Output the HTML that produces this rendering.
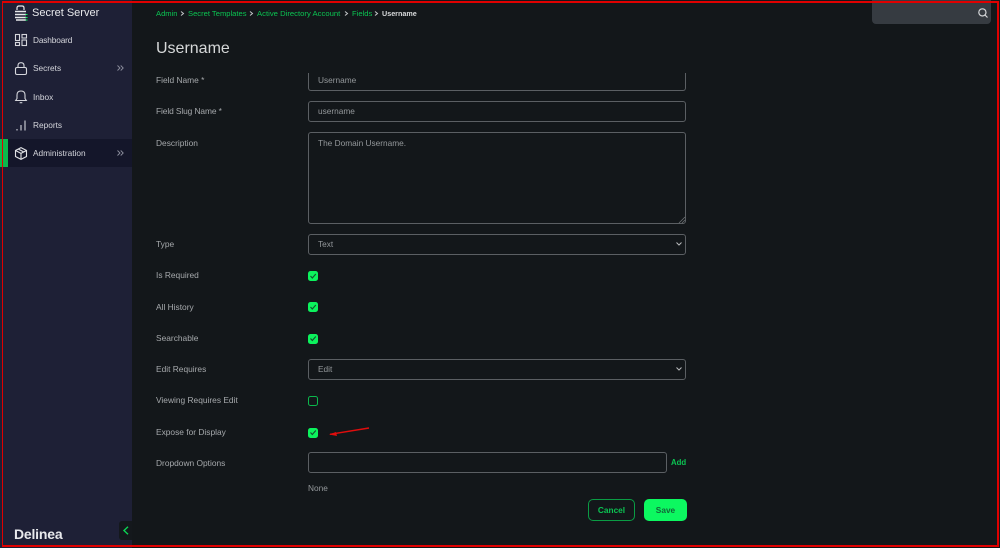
<!DOCTYPE html>
<html><head><meta charset="utf-8">
<style>
*{box-sizing:border-box}
html,body{margin:0;padding:0;width:1000px;height:548px;overflow:hidden;background:#13171a;font-family:"Liberation Sans",sans-serif;}
.t{white-space:nowrap;position:absolute}
.nav{font-size:8.3px;color:#d5d6dc;left:33px;line-height:12px}
.lab{font-size:8.4px;color:#a6a9ac;left:156px;line-height:12px}
.inp{position:absolute;left:308px;width:378px;border:1px solid #5b5f63;border-radius:3px}
.val{font-size:8.3px;color:#94989b;left:318px;line-height:12px}
.cb{position:absolute;left:308px;width:10px;height:10px;border-radius:2.5px;background:#0cf25d}
svg{position:absolute;overflow:visible}
</style></head><body>
<div style="position:absolute;left:0;top:0;width:132px;height:548px;background:#1e2036"></div>
<div style="position:absolute;left:0;top:139px;width:132px;height:28px;background:#14162a"></div>
<div style="position:absolute;left:0;top:139px;width:8px;height:28px;background:#0bb84c"></div>

<!-- logo -->
<svg style="left:14px;top:5px" width="15" height="16" viewBox="0 0 15 16" fill="none" stroke="#e6e7ea" stroke-width="1.2"><path d="M3 5V3Q3 1 5 1H8Q10 1 10 3V5"/><path d="M1 6.5H12M1 9.5H12M1 12.5H12M2 15H12" stroke-width="1.6"/><path d="M12.5 9V10M12.5 12V13M12.5 14.5V15.5" stroke="#0cf25d" stroke-width="2"/></svg>
<div class="t" style="left:32px;top:5px;font-size:11px;color:#e8e9ec;line-height:16px">Secret Server</div>

<!-- nav icons -->
<svg style="left:15px;top:34px" width="12" height="12" viewBox="0 0 12 12" fill="none" stroke="#d5d6dc" stroke-width="1.1"><rect x=".5" y=".5" width="4" height="6"/><rect x="7" y=".5" width="4.5" height="3.5"/><rect x=".5" y="8.5" width="4" height="3"/><rect x="7" y="6" width="4.5" height="5.5"/></svg>
<div class="t nav" style="top:34px;letter-spacing:-.15px">Dashboard</div>

<svg style="left:15px;top:62px" width="12" height="13" viewBox="0 0 12 13" fill="none" stroke="#d5d6dc" stroke-width="1.1"><rect x=".5" y="5.5" width="11" height="7" rx="1.5"/><path d="M3 5.5V3.5Q3 .7 6 .7T9 3.5V5.5"/></svg>
<div class="t nav" style="top:62px">Secrets</div>
<svg style="left:117px;top:65px" width="7" height="6" viewBox="0 0 7 6" fill="none" stroke="#8d8f9e" stroke-width=".9"><path d="M.5 .5L3 3L.5 5.5M3.7 .5L6.2 3L3.7 5.5"/></svg>

<svg style="left:15px;top:90px" width="12" height="14" viewBox="0 0 12 14" fill="none" stroke="#d5d6dc" stroke-width="1.1"><path d="M.7 10.5H11.3L10 8.5V5Q10 1 6 1T2 5V8.5Z"/><path d="M4.7 12.7H7.3"/></svg>
<div class="t nav" style="top:91px">Inbox</div>

<svg style="left:16px;top:120px" width="10" height="11" viewBox="0 0 10 11" fill="none" stroke="#d5d6dc" stroke-width="1.1"><path d="M1 9V10.5M5 5V10.5M9 .5V10.5"/></svg>
<div class="t nav" style="top:119px">Reports</div>

<svg style="left:15px;top:147px" width="12" height="13" viewBox="0 0 12 13" fill="none" stroke="#e0e1e5" stroke-width="1.1"><path d="M6 .6L11.5 3.5V9.5L6 12.4L.5 9.5V3.5ZM.5 3.5L6 6.4L11.5 3.5M6 6.4V12.4M3.2 2L8.8 5"/></svg>
<div class="t nav" style="top:147px">Administration</div>
<svg style="left:117px;top:150px" width="7" height="6" viewBox="0 0 7 6" fill="none" stroke="#8d8f9e" stroke-width=".9"><path d="M.5 .5L3 3L.5 5.5M3.7 .5L6.2 3L3.7 5.5"/></svg>

<div class="t" style="left:14px;top:525px;font-size:14px;font-weight:bold;color:#e8e9ec;line-height:18px;letter-spacing:-.2px">Delinea</div>
<div style="position:absolute;left:119px;top:521px;width:13px;height:19px;background:#14181c;border-radius:3px 0 0 3px"></div>
<svg style="left:123px;top:526px" width="6" height="9" viewBox="0 0 6 9" fill="none" stroke="#0bd653" stroke-width="1.4"><path d="M5 .7L1 4.5L5 8.3"/></svg>

<!-- search -->
<div style="position:absolute;left:872px;top:0;width:119px;height:24px;background:#363b41;border-radius:0 0 4px 4px"></div>
<svg style="left:978px;top:8px" width="10" height="10" viewBox="0 0 10 10" fill="none" stroke="#d4d6d8" stroke-width="1.2"><circle cx="4.4" cy="4.4" r="3.6"/><path d="M7 7L9.5 9.5"/></svg>

<!-- breadcrumb -->
<div class="t" style="left:156px;top:8px;font-size:7.6px;line-height:12px;color:#0bc452">Admin</div>
<div class="t" style="left:188px;top:8px;font-size:7.6px;line-height:12px;color:#0bc452">Secret Templates</div>
<div class="t" style="left:257px;top:8px;font-size:7.7px;line-height:12px;color:#0bc452">Active Directory Account</div>
<div class="t" style="left:352px;top:8px;font-size:7.6px;line-height:12px;color:#0bc452">Fields</div>
<div class="t" style="left:382px;top:8px;font-size:7.2px;line-height:12px;color:#d8dadb;font-weight:bold">Username</div>
<svg style="left:0;top:0" width="400" height="20" fill="none" stroke="#c5c8ca" stroke-width="1"><path d="M181 12L183.5 14L181 16M250 12L252.5 14L250 16M345 12L347.5 14L345 16M375 12L377.5 14L375 16" transform="translate(0,-0.5)"/></svg>

<div class="t" style="left:156px;top:39px;font-size:16px;line-height:20px;color:#d6d8d9">Username</div>

<!-- labels -->
<div class="t lab" style="top:74px">Field Name *</div>
<div class="t lab" style="top:105px;letter-spacing:-.1px">Field Slug Name *</div>
<div class="t lab" style="top:137px">Description</div>
<div class="t lab" style="top:238px">Type</div>
<div class="t lab" style="top:269px">Is Required</div>
<div class="t lab" style="top:301px">All History</div>
<div class="t lab" style="top:332px">Searchable</div>
<div class="t lab" style="top:363px">Edit Requires</div>
<div class="t lab" style="top:394px">Viewing Requires Edit</div>
<div class="t lab" style="top:426px">Expose for Display</div>
<div class="t lab" style="top:457px">Dropdown Options</div>

<!-- inputs -->
<div class="inp" style="top:73px;height:18px;border-top:none;border-radius:0 0 3px 3px"></div>
<div class="t val" style="top:74px">Username</div>
<div class="inp" style="top:101px;height:21px"></div>
<div class="t val" style="top:105px">username</div>
<div class="inp" style="top:132px;height:92px"></div>
<div class="t val" style="top:137px">The Domain Username.</div>
<svg style="left:679px;top:217px" width="6" height="6" fill="none" stroke="#6a6e72" stroke-width=".8"><path d="M0 6L6 0M3 6L6 3"/></svg>
<div class="inp" style="top:234px;height:21px"></div>
<div class="t val" style="top:238px">Text</div>
<svg style="left:676px;top:242px" width="6" height="4" fill="none" stroke="#b8babc" stroke-width="1"><path d="M.5 .5L3 3L5.5 .5"/></svg>
<div class="inp" style="top:359px;height:21px"></div>
<div class="t val" style="top:363px">Edit</div>
<svg style="left:676px;top:367px" width="6" height="4" fill="none" stroke="#b8babc" stroke-width="1"><path d="M.5 .5L3 3L5.5 .5"/></svg>
<div class="inp" style="top:452px;width:359px;height:21px"></div>
<div class="t" style="left:671px;top:457px;font-size:7.8px;font-weight:bold;line-height:12px;color:#0bc452">Add</div>
<div class="t val" style="left:308px;top:482px">None</div>

<!-- checkboxes -->
<div class="cb" style="top:271px"></div>
<div class="cb" style="top:302px"></div>
<div class="cb" style="top:333.5px"></div>
<div class="cb" style="top:396px;background:none;border:1.5px solid #0bb84c"></div>
<div class="cb" style="top:427.5px"></div>
<svg style="left:308px;top:271px" width="10" height="170" fill="none" stroke="#14502f" stroke-width="1.1"><path d="M2.5 5L4.3 7L7.8 3M2.5 36L4.3 38L7.8 34M2.5 67.5L4.3 69.5L7.8 65.5M2.5 161.5L4.3 163.5L7.8 159.5"/></svg>

<!-- arrow -->
<svg style="left:325px;top:424px" width="48" height="16"><path d="M5 10.3L44 4" stroke="#e00d0d" stroke-width="1.4"/><path d="M4 10.5L11 8L12 12Z" fill="#e00d0d"/></svg>

<!-- buttons -->
<div style="position:absolute;left:588px;top:499px;width:47px;height:22px;border:1px solid #0a9c44;border-radius:5px;color:#0bc452;font-size:8.3px;font-weight:bold;line-height:20px;text-align:center">Cancel</div>
<div style="position:absolute;left:644px;top:499px;width:43px;height:22px;background:#0cf860;border-radius:5px;color:#14663a;font-size:8.3px;font-weight:bold;line-height:22px;text-align:center">Save</div>

<!-- red frame -->
<div style="position:absolute;left:2px;top:1px;width:997px;height:546px;border:solid #e00000;border-width:2px 2px 2px 1.5px"></div>
</body></html>
